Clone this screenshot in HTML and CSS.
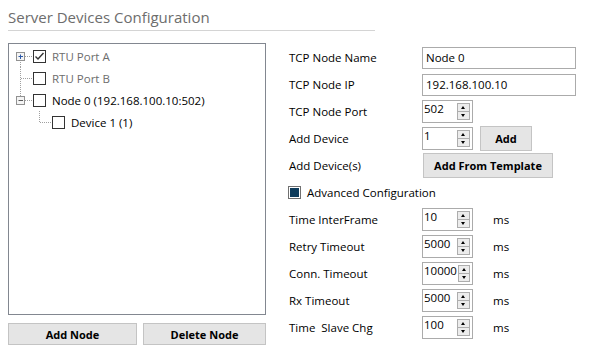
FILE: index.html
```html
<!DOCTYPE html>
<html lang="en">

<head>
    <meta charset="UTF-8" />
    <title>Server Devices Configuration</title>
    <link rel="stylesheet" href="styles.css">
</head>

<body>
    <div class="config">
        <div class="section-title">Server Devices Configuration</div>

        <div class="config-body">
            <div class="nodes-panel">
                <div class="tree">
                    <div class="tree-row">
                        <svg class="tree-gutter" width="24" height="22" viewBox="0 0 24 22">
                            <line x1="11.5" y1="15" x2="11.5" y2="22" class="dots" />
                            <line x1="16" y1="11.5" x2="23" y2="11.5" class="dots" />
                            <rect x="7.5" y="7.5" width="8" height="8" class="expander" />
                            <line x1="9.5" y1="11.5" x2="14" y2="11.5" class="plus" />
                            <line x1="11.5" y1="9.5" x2="11.5" y2="14" class="plus" />
                        </svg>
                        <span class="check">
                            <svg width="11" height="11" viewBox="0 0 11 11">
                                <path d="M1.5 5.5 L4 8 L9.5 2" fill="none" stroke="#333" stroke-width="1.4" />
                            </svg>
                        </span>
                        <span class="tree-label muted">RTU Port A</span>
                    </div>
                    <div class="tree-row">
                        <svg class="tree-gutter" width="24" height="22" viewBox="0 0 24 22">
                            <line x1="11.5" y1="0" x2="11.5" y2="22" class="dots" />
                            <line x1="12" y1="11.5" x2="23" y2="11.5" class="dots" />
                        </svg>
                        <span class="check"></span>
                        <span class="tree-label muted">RTU Port B</span>
                    </div>
                    <div class="tree-row">
                        <svg class="tree-gutter" width="24" height="22" viewBox="0 0 24 22">
                            <line x1="11.5" y1="0" x2="11.5" y2="7" class="dots" />
                            <line x1="16" y1="11.5" x2="23" y2="11.5" class="dots" />
                            <rect x="7.5" y="7.5" width="8" height="8" class="expander" />
                            <line x1="9.5" y1="11.5" x2="14" y2="11.5" class="minus" />
                        </svg>
                        <span class="check"></span>
                        <span class="tree-label">Node 0 (192.168.100.10:502)</span>
                    </div>
                    <div class="tree-row">
                        <svg class="tree-gutter child" width="43" height="22" viewBox="0 0 43 22">
                            <line x1="30.5" y1="0" x2="30.5" y2="12" class="dots" />
                            <line x1="31" y1="11.5" x2="42" y2="11.5" class="dots" />
                        </svg>
                        <span class="check"></span>
                        <span class="tree-label">Device 1 (1)</span>
                    </div>
                </div>

                <div class="node-buttons">
                    <button class="btn btn-add-node">Add Node</button>
                    <button class="btn btn-delete-node">Delete Node</button>
                </div>
            </div>

            <div class="settings">
                <label class="field-label">TCP Node Name</label>
                <div class="field"><input class="text-input" type="text" value="Node 0"></div>

                <label class="field-label">TCP Node IP</label>
                <div class="field"><input class="text-input" type="text" value="192.168.100.10"></div>

                <label class="field-label">TCP Node Port</label>
                <div class="field">
                    <div class="spinner"><span class="spin-value">502</span><span class="spin-buttons"><span class="spin-btn up"></span><span class="spin-btn down"></span></span></div>
                </div>

                <label class="field-label">Add Device</label>
                <div class="field">
                    <div class="spinner"><span class="spin-value">1</span><span class="spin-buttons"><span class="spin-btn up"></span><span class="spin-btn down"></span></span></div>
                    <button class="btn btn-add">Add</button>
                </div>

                <label class="field-label">Add Device(s)</label>
                <div class="field"><button class="btn btn-template">Add From Template</button></div>

                <div class="advanced">
                    <span class="adv-check"><span class="adv-fill"></span></span>
                    <span>Advanced Configuration</span>
                </div>

                <label class="field-label">Time InterFrame</label>
                <div class="field">
                    <div class="spinner"><span class="spin-value">10</span><span class="spin-buttons"><span class="spin-btn up"></span><span class="spin-btn down"></span></span></div>
                    <span class="unit">ms</span>
                </div>

                <label class="field-label">Retry Timeout</label>
                <div class="field">
                    <div class="spinner"><span class="spin-value">5000</span><span class="spin-buttons"><span class="spin-btn up"></span><span class="spin-btn down"></span></span></div>
                    <span class="unit">ms</span>
                </div>

                <label class="field-label">Conn. Timeout</label>
                <div class="field">
                    <div class="spinner"><span class="spin-value">10000</span><span class="spin-buttons"><span class="spin-btn up"></span><span class="spin-btn down"></span></span></div>
                    <span class="unit">ms</span>
                </div>

                <label class="field-label">Rx Timeout</label>
                <div class="field">
                    <div class="spinner"><span class="spin-value">5000</span><span class="spin-buttons"><span class="spin-btn up"></span><span class="spin-btn down"></span></span></div>
                    <span class="unit">ms</span>
                </div>

                <label class="field-label">Time&nbsp; Slave Chg</label>
                <div class="field">
                    <div class="spinner"><span class="spin-value">100</span><span class="spin-buttons"><span class="spin-btn up"></span><span class="spin-btn down"></span></span></div>
                    <span class="unit">ms</span>
                </div>
            </div>
        </div>
    </div>
</body>

</html>
```

FILE: styles.css
```css
* {
    box-sizing: border-box;
}

body {
    margin: 0;
    background-color: #fff;
    font-family: "Open Sans", "Noto Sans", sans-serif;
    font-size: 11.5px;
    color: #000;
}

.config {
    padding: 0 8px;
}

.section-title {
    width: 367px;
    height: 31px;
    padding-top: 7px;
    font-size: 15px;
    line-height: 20px;
    color: #6d6d6d;
    border-bottom: 1px solid #d4d4d4;
}

.config-body {
    display: flex;
    margin-top: 12px;
}

/* left side: tree + buttons */

.nodes-panel {
    width: 258px;
}

.tree {
    height: 272px;
    border: 1px solid #828790;
    padding-top: 1px;
}

.tree-row {
    display: flex;
    align-items: center;
    height: 22px;
}

.tree-gutter {
    flex: none;
    display: block;
}

.tree-gutter .dots {
    stroke: #a0a0a0;
    stroke-width: 1;
    stroke-dasharray: 1 1;
}

.tree-gutter .expander {
    fill: #f4f4f4;
    stroke: #919191;
    stroke-width: 1;
}

.tree-gutter .plus {
    stroke: #2e5aa8;
    stroke-width: 1;
}

.tree-gutter .minus {
    stroke: #5a5a5a;
    stroke-width: 1;
}

.check {
    flex: none;
    width: 13px;
    height: 13px;
    border: 1px solid #333;
    background-color: #fff;
    display: flex;
    align-items: center;
    justify-content: center;
}

.check svg {
    display: block;
}

.tree-label {
    margin-left: 6px;
    white-space: nowrap;
}

.tree-label.muted {
    color: #6d6d6d;
}

.node-buttons {
    display: flex;
    gap: 6px;
    margin-top: 8px;
}

.btn {
    height: 22px;
    padding: 0;
    font-family: "Open Sans", "Noto Sans", sans-serif;
    font-size: 11px;
    font-weight: bold;
    color: #000;
    background-color: #e5e5e5;
    border: 1px solid #c4c4c4;
}

.btn-add-node {
    width: 129px;
}

.btn-delete-node {
    width: 123px;
}

/* right side: settings grid */

.settings {
    display: grid;
    grid-template-columns: 133px auto;
    grid-auto-rows: 27px;
    align-items: center;
    margin-left: 23px;
    margin-top: 1px;
}

.field {
    display: flex;
    align-items: center;
}

.text-input {
    width: 154px;
    height: 22px;
    padding: 0 3px;
    font-family: "Open Sans", "Noto Sans", sans-serif;
    font-size: 11.5px;
    color: #000;
    border: 1px solid #ababab;
    outline: none;
}

.spinner {
    display: flex;
    justify-content: space-between;
    width: 51px;
    height: 23px;
    border: 1px solid #ababab;
    background-color: #fff;
}

.spin-value {
    padding: 0 1px;
    line-height: 16px;
}

.spin-buttons {
    display: flex;
    flex-direction: column;
    width: 13px;
    margin: 2px 2px 2px 0;
}

.spin-btn {
    flex: 1;
    border: 1px solid #adadad;
    background-color: #ececec;
    position: relative;
}

.spin-btn + .spin-btn {
    border-top: none;
}

.spin-btn::after {
    content: "";
    position: absolute;
    left: 3px;
    top: 2px;
    border-left: 2.5px solid transparent;
    border-right: 2.5px solid transparent;
}

.spin-btn.up::after {
    border-bottom: 3px solid #000;
}

.spin-btn.down::after {
    top: 2px;
    border-top: 3px solid #000;
}

.btn-add {
    width: 52px;
    height: 25px;
    margin-left: 7px;
}

.btn-template {
    width: 130px;
    height: 25px;
    margin-left: 1px;
}

.advanced {
    grid-column: 1 / 3;
    display: flex;
    align-items: center;
    margin-left: -1px;
}

.adv-check {
    width: 13px;
    height: 13px;
    border: 1px solid #707070;
    padding: 1px;
    margin-right: 6px;
    background-color: #fff;
}

.adv-fill {
    display: block;
    width: 100%;
    height: 100%;
    background-color: #0e3c5c;
}

.unit {
    margin-left: 20px;
}
```
